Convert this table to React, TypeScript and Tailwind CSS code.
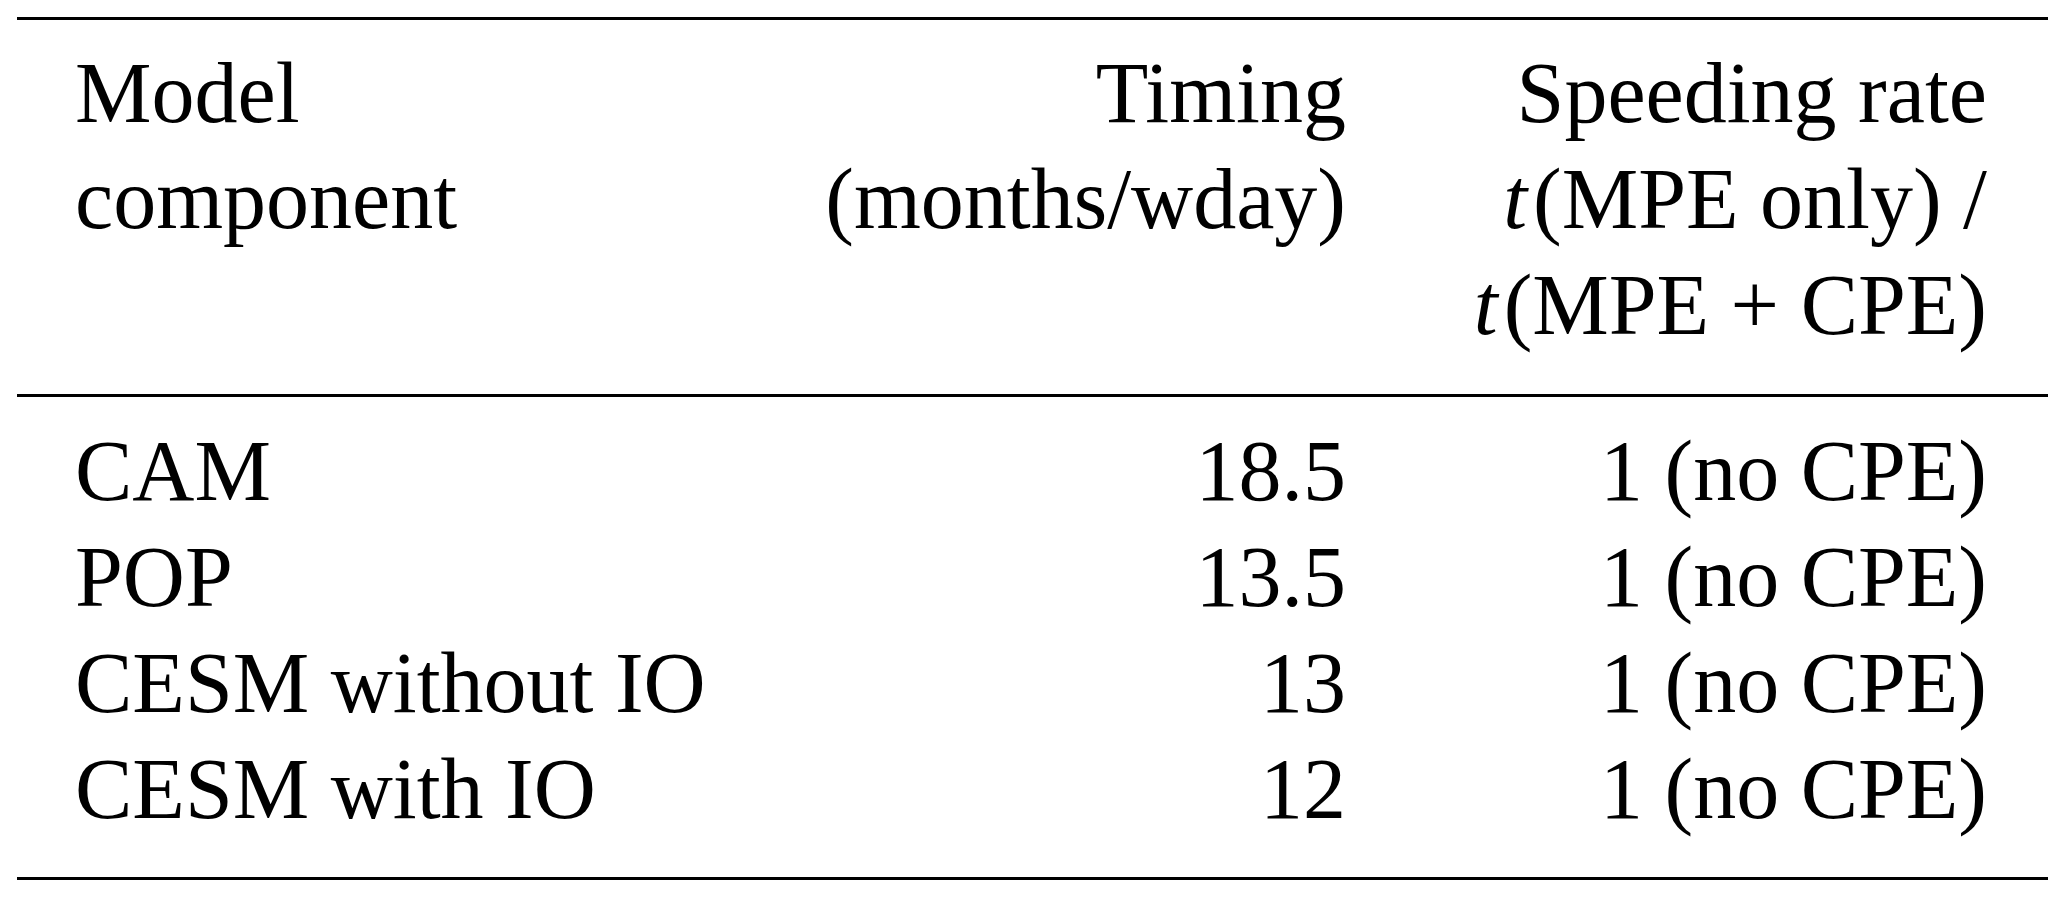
export default function App() {
  const rows = [
    { name: "CAM", timing: "18.5", rate: "1 (no CPE)" },
    { name: "POP", timing: "13.5", rate: "1 (no CPE)" },
    { name: "CESM without IO", timing: "13", rate: "1 (no CPE)" },
    { name: "CESM with IO", timing: "12", rate: "1 (no CPE)" },
  ];

  return (
    <div className="min-h-screen bg-white pt-[17px] text-black font-[family-name:'Liberation_Serif',serif] text-[86px] leading-[106px]">
      <div className="ml-[17px] w-[2031px]">
        {/* Header */}
        <div className="grid grid-cols-[minmax(0,1fr)_700px_641px] border-y-[3px] border-black pl-[58px] pr-[61px] pt-[20px] pb-[36px]">
          <div>
            <div>Model</div>
            <div>component</div>
          </div>
          <div className="text-right">
            <div>Timing</div>
            <div>(months/wday)</div>
          </div>
          <div className="text-right">
            <div>Speeding rate</div>
            <div>
              <i className="pr-[6px]">t</i>(MPE only) /
            </div>
            <div>
              <i className="pr-[6px]">t</i>(MPE + CPE)
            </div>
          </div>
        </div>

        {/* Body */}
        <div className="border-b-[3px] border-black pl-[58px] pr-[61px] pt-[21px] pb-[35px]">
          {rows.map((r) => (
            <div key={r.name} className="grid grid-cols-[minmax(0,1fr)_700px_641px]">
              <div className="whitespace-nowrap">{r.name}</div>
              <div className="text-right">{r.timing}</div>
              <div className="text-right whitespace-nowrap">{r.rate}</div>
            </div>
          ))}
        </div>
      </div>
    </div>
  );
}
